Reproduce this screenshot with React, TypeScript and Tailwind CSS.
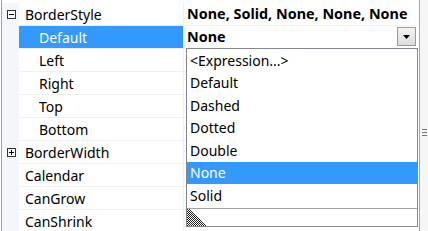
import * as React from "react";

type Row = { name: string; value?: string; indent?: boolean; toggle?: "minus" | "plus"; selected?: boolean };

const rows: Row[] = [
  { name: "BorderStyle", value: "None, Solid, None, None, None", toggle: "minus" },
  { name: "Default", value: "None", indent: true, selected: true },
  { name: "Left", indent: true },
  { name: "Right", indent: true },
  { name: "Top", indent: true },
  { name: "Bottom", indent: true },
  { name: "BorderWidth", toggle: "plus" },
  { name: "Calendar" },
  { name: "CanGrow" },
  { name: "CanShrink" },
];

const options = ["<Expression...>", "Default", "Dashed", "Dotted", "Double", "None", "Solid"];

function ToggleBox({ kind }: { kind: "minus" | "plus" }) {
  return (
    <svg width="9" height="9" viewBox="0 0 9 9" className="block ml-[5px]">
      <rect x="0.5" y="0.5" width="8" height="8" fill="white" stroke="#333" />
      <line x1="2" y1="4.5" x2="7" y2="4.5" stroke="#000" />
      {kind === "plus" && <line x1="4.5" y1="2" x2="4.5" y2="7" stroke="#000" />}
    </svg>
  );
}

function Grip() {
  return (
    <svg width="20" height="19" viewBox="0 0 20 19" className="block">
      {[0, 2, 4, 6, 8, 10, 12, 14, 16, 18].map((o) => (
        <line key={o} x1={0} y1={o} x2={19 - o} y2={19} stroke="#222" strokeWidth="1" />
      ))}
    </svg>
  );
}

export default function App() {
  return (
    <div
      className="relative w-[428px] h-[231px] overflow-hidden bg-white text-[14px] text-black"
      style={{ fontFamily: '"Noto Sans", "Open Sans", sans-serif' }}
    >
      <div className="flex h-full">
        <div className="w-[1px] bg-[#a0a0a0] ml-[1px]" />
        <div className="flex-1 flex flex-col pt-[3px]">
          {rows.map((r) => (
            <div key={r.name} className="flex h-[23px] shrink-0">
              <div className="w-[17px] bg-[#f3f6fb] flex items-center">
                {r.toggle && <ToggleBox kind={r.toggle} />}
              </div>
              <div
                className={
                  "w-[164px] flex items-center border-b border-[#eef0f3] " +
                  (r.selected ? "bg-[#3399ff] text-white" : "")
                }
              >
                <span className={r.indent ? "pl-[20px]" : "pl-[6px]"}>{r.name}</span>
              </div>
              <div className="w-[1px] bg-[#eef0f3]" />
              <div className="flex-1 flex items-center border-b border-[#eef0f3] pl-[3px] font-bold text-[14.4px] relative">
                {r.value}
                {r.selected && (
                  <div className="absolute right-[2px] top-[1px] w-[19px] h-[19px] border border-[#9a9a9a] bg-gradient-to-b from-[#f4f4f4] to-[#dcdcdc] flex items-center justify-center">
                    <svg width="7" height="4" viewBox="0 0 7 4">
                      <path d="M0 0h7L3.5 4z" fill="#000" />
                    </svg>
                  </div>
                )}
              </div>
            </div>
          ))}
        </div>
        <div className="w-[1px] bg-[#a8a8a8] ml-[1px]" />
        <div className="w-[8px] bg-[#f6f6f6] flex flex-col items-center pt-[129px] gap-[2px]">
          <div className="w-[5px] h-[1px] bg-[#777]" />
          <div className="w-[5px] h-[1px] bg-[#777]" />
          <div className="w-[5px] h-[1px] bg-[#777]" />
        </div>
      </div>

      <div className="absolute left-[186px] top-[48px] w-[232px] h-[179px] border border-[#828790] bg-white flex flex-col">
        {options.map((o) => (
          <div
            key={o}
            className={
              "h-[22.5px] shrink-0 flex items-center pl-[3px] " +
              (o === "None" ? "bg-[#3399ff] text-white" : "")
            }
          >
            {o}
          </div>
        ))}
        <div className="mt-[1px] border-t border-[#a0a0a0] flex-1 flex items-end overflow-hidden">
          <Grip />
        </div>
      </div>
    </div>
  );
}
